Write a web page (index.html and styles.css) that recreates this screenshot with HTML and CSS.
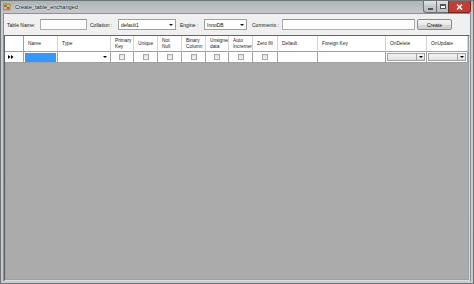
FILE: index.html
```html
<!DOCTYPE html>
<html>
<head>
<meta charset="utf-8">
<link rel="stylesheet" href="styles.css">
</head>
<body>
<div class="window">
  <div class="titlebar">
    <svg class="app-icon" width="8" height="8" viewBox="0 0 8 8">
      <rect x="0" y="1" width="7" height="6" fill="#e8b53a" stroke="#8a6a1a" stroke-width="0.6"/>
      <rect x="1" y="2" width="3" height="2" fill="#4f7fc7"/>
      <rect x="4" y="4" width="2" height="2" fill="#c9463a"/>
    </svg>
    <span class="title">Create_table_enchanged</span>
    <div class="caption-buttons">
      <span class="cbtn min"><span class="min-bar"></span></span>
      <span class="cbtn max"><span class="max-box"></span></span>
      <span class="cbtn xbtn">
        <svg width="7" height="6" viewBox="0 0 7 6"><path d="M1 0.5 L6 5.5 M6 0.5 L1 5.5" stroke="#ffffff" stroke-width="1.6"/></svg>
      </span>
    </div>
  </div>
  <div class="client">
    <div class="toolbar">
      <span class="label l1">Table Name:</span>
      <span class="textbox tb1"></span>
      <span class="label l2">Collation :</span>
      <span class="combo c1"><span class="ctext">default1</span><span class="arrow"></span></span>
      <span class="label l3">Engine :</span>
      <span class="combo c2"><span class="ctext">InnoDB</span><span class="arrow"></span></span>
      <span class="label l4">Comments :</span>
      <span class="textbox tb2"></span>
      <span class="button">Create</span>
    </div>
    <div class="grid">
      <div class="rows">
        <div class="hcell corner"></div>
        <div class="hcell">Name</div>
        <div class="hcell">Type</div>
        <div class="hcell">Primary<br>Key</div>
        <div class="hcell">Unique</div>
        <div class="hcell">Not<br>Null</div>
        <div class="hcell">Binary<br>Column</div>
        <div class="hcell">Unsigned<br>data</div>
        <div class="hcell">Auto<br>Increment</div>
        <div class="hcell">Zero fill</div>
        <div class="hcell">Default</div>
        <div class="hcell">Foreign Key</div>
        <div class="hcell">OnDelete</div>
        <div class="hcell">OnUpdate</div>

        <div class="dcell rowhead">
          <svg width="6" height="4" viewBox="0 0 6 4"><path d="M0 0 L2.5 2 L0 4 Z M3 0 L5.5 2 L3 4 Z" fill="#000"/></svg>
        </div>
        <div class="dcell name"><span class="sel"></span></div>
        <div class="dcell type"><span class="darrow"></span></div>
        <div class="dcell chk"><span class="box"></span></div>
        <div class="dcell chk"><span class="box"></span></div>
        <div class="dcell chk"><span class="box"></span></div>
        <div class="dcell chk"><span class="box"></span></div>
        <div class="dcell chk"><span class="box"></span></div>
        <div class="dcell chk"><span class="box"></span></div>
        <div class="dcell chk"><span class="box"></span></div>
        <div class="dcell"></div>
        <div class="dcell"></div>
        <div class="dcell cmbcell"><span class="gcombo"><span class="gbtn"><span class="darrow"></span></span></span></div>
        <div class="dcell cmbcell"><span class="gcombo"><span class="gbtn"><span class="darrow"></span></span></span></div>
      </div>
    </div>
  </div>
</div>
</body>
</html>
```

FILE: styles.css
```css
* { box-sizing: border-box; }
html, body { margin: 0; padding: 0; }
body {
  width: 474px;
  height: 284px;
  overflow: hidden;
  font-family: "Liberation Sans", Arial, sans-serif;
  color: #1e1e1e;
}
.window {
  width: 474px;
  height: 284px;
  display: flex;
  flex-direction: column;
  background: linear-gradient(#aeb3b8, #c8ccd0 14px, #c6cace);
  border: 1px solid #6f7479;
}
.titlebar {
  height: 12px;
  display: flex;
  align-items: center;
  padding-left: 2px;
}
.app-icon { margin-right: 4px; }
.title {
  font-size: 5.6px;
  color: #111;
  text-shadow: 0 0 2px #fff, 0 0 2px #fff;
}
.caption-buttons {
  margin-left: auto;
  margin-right: 2px;
  display: flex;
  align-self: flex-start;
  height: 12px;
}
.cbtn {
  height: 12px;
  border: 1px solid #6d7177;
  border-top: none;
  border-right: none;
  display: flex;
  align-items: center;
  justify-content: center;
  background: linear-gradient(#e2e5e8, #c4c8cc 50%, #b7bcc1);
}
.min { width: 13px; border-bottom-left-radius: 3px; }
.max { width: 12px; }
.min-bar { width: 5px; height: 2px; background: #fff; border: 0.5px solid #555; margin-top: 4px; }
.max-box { width: 6px; height: 5px; border: 1px solid #555; border-top-width: 2px; background: #fff; }
.cbtn.xbtn {
  width: 23px;
  background: #c63d2f;
  border-color: #6b2a22;
  border-right: 1px solid #6b2a22;
  border-bottom-right-radius: 3px;
}
.client {
  flex: 1;
  margin: 0 2px 2px 2px;
  background: #f0f0f0;
  display: flex;
  flex-direction: column;
  border: 1px solid #8b9096;
  border-bottom: none;
}
.toolbar {
  height: 21px;
  display: flex;
  align-items: center;
  padding-left: 3px;
  font-size: 5px;
}
.label { display: inline-block; white-space: nowrap; color: #222; }
.l1 { width: 33px; }
.l2 { width: 28px; margin-left: 3px; }
.l3 { width: 24px; margin-left: 4px; }
.l4 { width: 30px; margin-left: 5px; }
.textbox {
  height: 11px;
  background: #fff;
  border: 1px solid #abadb3;
  border-top-color: #8e9196;
}
.tb1 { width: 47px; }
.tb2 { width: 133px; }
.combo {
  height: 11px;
  background: #fff;
  border: 1px solid #9aa0a6;
  display: flex;
  align-items: center;
  padding-left: 2px;
}
.c1 { width: 58px; }
.c2 { width: 43px; }
.ctext { flex: 1; color: #111; }
.arrow {
  width: 0; height: 0;
  border-left: 2px solid transparent;
  border-right: 2px solid transparent;
  border-top: 2px solid #111;
  margin-right: 2px;
}
.button {
  margin-left: 2px;
  width: 35px;
  height: 11px;
  border: 1px solid #8a8a8a;
  border-radius: 2px;
  background: linear-gradient(#f4f4f4, #e8e8e8 50%, #d8d8d8 51%, #cfcfcf);
  display: flex;
  align-items: center;
  justify-content: center;
  color: #111;
}
.grid {
  flex: 1;
  background: #ababab;
  border: 1px solid #646464;
  border-right-color: #dcdcdc;
  border-bottom-color: #dcdcdc;
  box-shadow: inset 0 0 0 1px #a0a0a0;
}
.rows {
  display: grid;
  grid-template-columns: 19px 34px 53px 23px 24px 24px 24px 23px 24px 25px 40px 68px 41px 41px;
  grid-template-rows: 16px 11px;
  font-size: 4.8px;
  line-height: 5.4px;
}
.hcell {
  background: #fff;
  border-right: 1px solid #d5d5d5;
  border-bottom: 1px solid #a0a0a0;
  display: flex;
  align-items: center;
  padding-left: 4px;
  color: #222;
  white-space: nowrap;
  overflow: hidden;
}
.hcell.corner { border-right-color: #a0a0a0; }
.dcell {
  background: #fff;
  border-right: 1px solid #a0a0a0;
  border-bottom: 1px solid #a0a0a0;
  display: flex;
  align-items: center;
  justify-content: center;
}
.rowhead { justify-content: flex-start; padding-left: 3px; }
.name { padding: 1px 1px 0 1px; align-items: stretch; }
.sel { flex: 1; background: #3399ff; }
.type { justify-content: flex-end; padding-right: 3px; }
.darrow {
  width: 0; height: 0;
  border-left: 2px solid transparent;
  border-right: 2px solid transparent;
  border-top: 2px solid #000;
}
.box {
  width: 6px;
  height: 6px;
  border: 1px solid #a8a8a8;
  background: linear-gradient(#e0e0e0, #f6f6f6);
}
.cmbcell { padding: 1px; align-items: stretch; justify-content: stretch; }
.gcombo {
  flex: 1;
  border: 1px solid #a3a3a3;
  background: linear-gradient(#f2f2f2, #e2e2e2);
  display: flex;
  justify-content: flex-end;
}
.gbtn {
  width: 8px;
  border-left: 1px solid #a3a3a3;
  background: linear-gradient(#f7f7f7, #dcdcdc);
  display: flex;
  align-items: center;
  justify-content: center;
}
```
